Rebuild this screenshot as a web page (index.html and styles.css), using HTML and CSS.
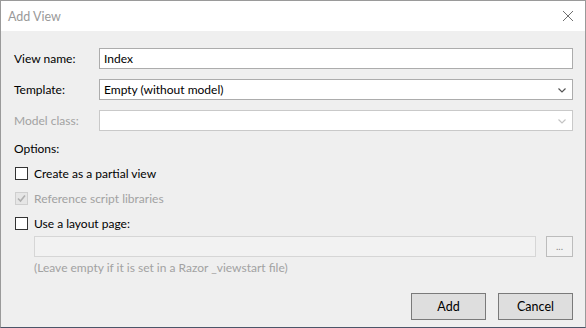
FILE: index.html
```html
<!DOCTYPE html>
<html>
<head>
<meta charset="utf-8">
<link rel="stylesheet" href="styles.css">
</head>
<body>
<div class="window">
  <div class="titlebar">
    <span class="title">Add View</span>
    <svg class="close" width="12" height="12" viewBox="0 0 12 12"><path d="M1 1 L11 11 M11 1 L1 11" stroke="#6f6f6f" stroke-width="1" fill="none"/></svg>
  </div>
  <div class="content">
    <div class="form">
      <label class="lbl">View name:</label>
      <div class="field text">Index</div>
      <label class="lbl">Template:</label>
      <div class="field select">Empty (without model)<svg class="chev" width="8" height="5" viewBox="0 0 8 5"><path d="M0.5 0.5 L4 4 L7.5 0.5" stroke="#555" stroke-width="1.2" fill="none"/></svg></div>
      <label class="lbl disabled">Model class:</label>
      <div class="field select dis"><svg class="chev" width="8" height="5" viewBox="0 0 8 5"><path d="M0.5 0.5 L4 4 L7.5 0.5" stroke="#c4c4c4" stroke-width="1.2" fill="none"/></svg></div>
    </div>
    <div class="options">Options:</div>
    <div class="check"><span class="box"></span><span>Create as a partial view</span></div>
    <div class="check disabled"><span class="box dbox"><svg width="11" height="11" viewBox="0 0 11 11"><path d="M2 5.5 L4.5 8 L9 2.5" stroke="#b0b0b0" stroke-width="1.6" fill="none"/></svg></span><span>Reference script libraries</span></div>
    <div class="check"><span class="box"></span><span>Use a layout page:</span></div>
    <div class="layout-row">
      <div class="field layout"></div>
      <div class="browse">...</div>
    </div>
    <div class="hint">(Leave empty if it is set in a Razor _viewstart file)</div>
    <div class="buttons">
      <button class="btn">Add</button>
      <button class="btn">Cancel</button>
    </div>
  </div>
</div>
</body>
</html>
```
FILE: styles.css
```css
html, body {
  margin: 0;
  padding: 0;
}
body {
  font-family: Lato, "Liberation Sans", sans-serif;
  font-size: 12px;
  color: #000;
  background: #fff;
}
.window {
  width: 586px;
  height: 328px;
  box-sizing: border-box;
  border: 1px solid #9a9a9a;
  border-bottom-color: #4b5568;
  display: flex;
  flex-direction: column;
}
.titlebar {
  height: 30px;
  flex: none;
  background: #fff;
  display: flex;
  align-items: center;
  justify-content: space-between;
  padding: 0 11px 0 7px;
}
.title {
  color: #999;
  font-size: 12.5px;
}
.close {
  display: block;
  margin-top: -1px;
}
.content {
  flex: 1;
  background: #efefef;
  padding: 17px 12px 0 13px;
  display: flex;
  flex-direction: column;
}
.form {
  display: grid;
  grid-template-columns: 85px 1fr;
  row-gap: 10px;
  align-items: center;
}
.lbl.disabled, .check.disabled, .hint {
  color: #a2a2a2;
}
.field {
  height: 21px;
  box-sizing: border-box;
  border: 1px solid #acacac;
  background: #fff;
  display: flex;
  align-items: center;
  padding-left: 4px;
  position: relative;
}
.field.dis {
  border-color: #c9c9c9;
}
.chev {
  position: absolute;
  right: 6px;
  top: 8px;
}
.options {
  margin-top: 10px;
  line-height: 16px;
}
.check {
  display: flex;
  align-items: center;
  height: 13px;
  margin-top: 9px;
  padding-left: 1px;
}
.check + .check {
  margin-top: 12px;
}
.options + .check {
  margin-top: 10px;
}
.box {
  width: 13px;
  height: 13px;
  box-sizing: border-box;
  border: 1px solid #333;
  background: #fff;
  margin-right: 6px;
  flex: none;
  display: flex;
  align-items: center;
  justify-content: center;
}
.dbox {
  border-color: #cfcfcf;
  background: #e6e6e6;
}
.layout-row {
  display: flex;
  margin-top: 6px;
  padding-left: 20px;
  gap: 10px;
}
.field.layout {
  flex: 1;
  background: #f2f2f2;
  border-color: #d6d6d6;
}
.browse {
  width: 27px;
  height: 21px;
  box-sizing: border-box;
  border: 1px solid #bcbcbc;
  background: #f2f2f2;
  color: #888;
  font-size: 10px;
  display: flex;
  align-items: center;
  justify-content: center;
  padding-bottom: 2px;
}
.hint {
  padding-left: 20px;
  margin-top: 3px;
  line-height: 16px;
}
.buttons {
  display: flex;
  justify-content: flex-end;
  gap: 12px;
  margin-top: 17px;
}
.btn {
  width: 75px;
  height: 27px;
  box-sizing: border-box;
  border: 1px solid #7a7a7a;
  background: #dedede;
  font-family: inherit;
  font-size: 12.5px;
  color: #000;
  padding: 0;
}
```
